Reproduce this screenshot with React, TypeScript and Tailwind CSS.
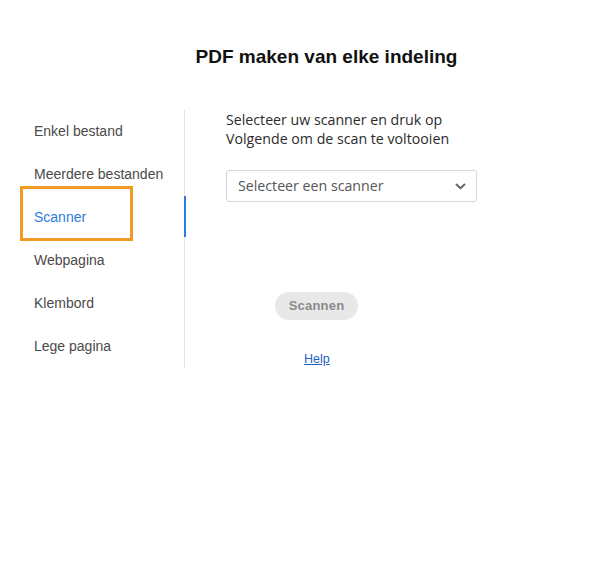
import React, { useState } from 'react';

const items = ['Enkel bestand', 'Meerdere bestanden', 'Scanner', 'Webpagina', 'Klembord', 'Lege pagina'];

export default function App() {
  const [active, setActive] = useState(2);

  return (
    <div className="w-[591px] h-[588px] bg-white font-['Liberation_Sans',Arial,sans-serif]">
      <div className="flex justify-center pl-[62px] pt-[45px]">
        <h1 className="text-[19px] leading-[24px] font-bold text-[#111]">PDF maken van elke indeling</h1>
      </div>

      <div className="flex mt-[41px]">
        <ul className="w-[185px] border-r border-[#e4e4e4]">
          {items.map((label, i) => (
            <li
              key={label}
              onClick={() => setActive(i)}
              className={`relative h-[43px] flex items-center pl-[34px] text-[14px] cursor-pointer ${
                i === active ? 'text-[#2d7ae0]' : 'text-[#4a4a4a]'
              }`}
            >
              {label}
              {i === active && (
                <>
                  <span className="absolute left-[20px] top-[-10px] w-[113px] h-[55px] border-[3px] border-[#f39a22]" />
                  <span className="absolute right-[-2px] top-[0px] bottom-[2px] w-[2px] bg-[#2d7ae0]" />
                </>
              )}
            </li>
          ))}
        </ul>

        <div className="flex flex-col pl-[41px] pt-0 font-['Open_Sans',sans-serif]">
          <p className="text-[14.2px] leading-[19px] text-[#2b2b2b]">
            Selecteer uw scanner en druk op
            <br />
            Volgende om de scan te voltooien
          </p>

          <div className="mt-[22px] w-[251px] h-[32px] flex items-center justify-between pl-[11px] pr-[10px] border border-[#d6d6d6] rounded-[3px] text-[14.2px] text-[#555]">
            <span>Selecteer een scanner</span>
            <svg width="11" height="7" viewBox="0 0 11 7" fill="none">
              <path d="M1.5 1.5 L5.5 5.2 L9.5 1.5" stroke="#666" strokeWidth="2" strokeLinecap="round" strokeLinejoin="round" />
            </svg>
          </div>

          <button className="mt-[90px] ml-[49px] w-[83px] h-[28px] rounded-full bg-[#e8e8e8] text-[13px] font-bold text-[#8a8a8a] font-['Liberation_Sans',Arial,sans-serif] tracking-[0.2px]">
            Scannen
          </button>

          <a href="#" className="mt-[31px] ml-[78px] w-fit text-[12.5px] leading-[16px] text-[#1f5fc4] underline font-['Liberation_Sans',Arial,sans-serif]">
            Help
          </a>
        </div>
      </div>
    </div>
  );
}
